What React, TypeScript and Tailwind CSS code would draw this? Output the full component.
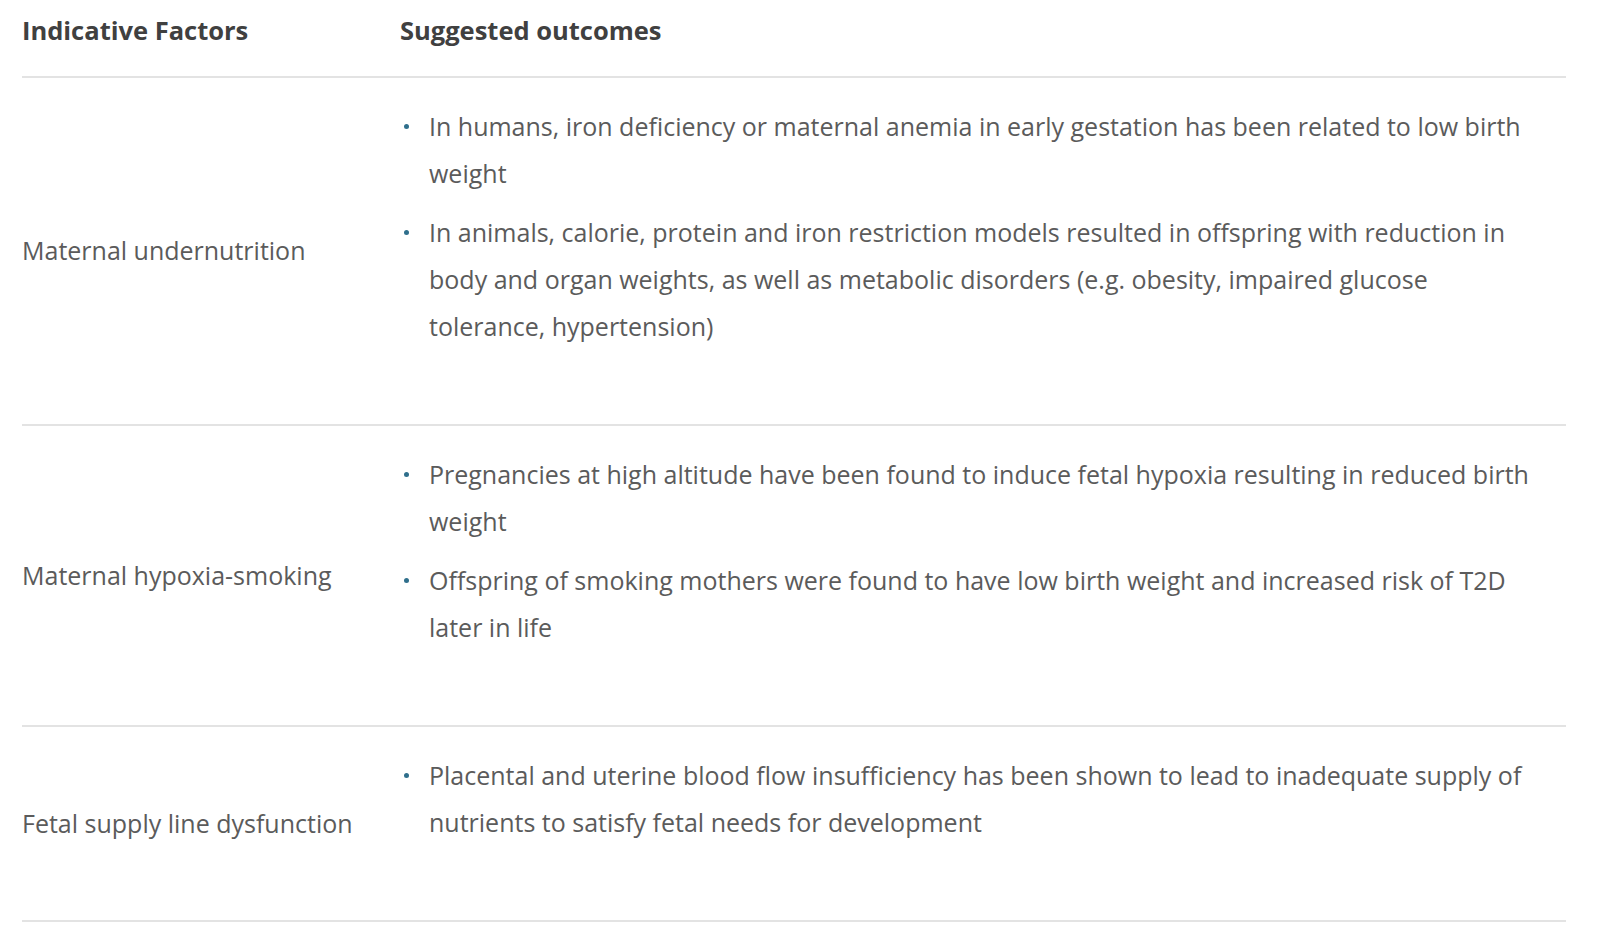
import React from "react";

type Row = { factor: string; outcomes: string[] };

const rows: Row[] = [
  {
    factor: "Maternal undernutrition",
    outcomes: [
      "In humans, iron deficiency or maternal anemia in early gestation has been related to low birth weight",
      "In animals, calorie, protein and iron restriction models resulted in offspring with reduction in body and organ weights, as well as metabolic disorders (e.g. obesity, impaired glucose tolerance, hypertension)",
    ],
  },
  {
    factor: "Maternal hypoxia-smoking",
    outcomes: [
      "Pregnancies at high altitude have been found to induce fetal hypoxia resulting in reduced birth weight",
      "Offspring of smoking mothers were found to have low birth weight and increased risk of T2D later in life",
    ],
  },
  {
    factor: "Fetal supply line dysfunction",
    outcomes: [
      "Placental and uterine blood flow insufficiency has been shown to lead to inadequate supply of nutrients to satisfy fetal needs for development",
    ],
  },
];

const FactorRow = ({ row }: { row: Row }) => (
  <div className="grid grid-cols-[378px_1fr] border-b-2 border-[#e3e3e3]">
    <div className="flex items-center text-[25px] text-[#5b5b5b]">{row.factor}</div>
    <ul className="pt-[25px] pb-[62px] pr-[28px]">
      {row.outcomes.map((o) => (
        <li key={o} className="flex mb-3 text-[25px] leading-[47px] text-[#5b5b5b]">
          <span className="w-[29px] shrink-0 pt-[21px] pl-[4px]">
            <span className="block w-[5px] h-[5px] rounded-full bg-[#2f6f8c]" />
          </span>
          <span>{o}</span>
        </li>
      ))}
    </ul>
  </div>
);

export default function App() {
  return (
    <div
      className="min-h-[946px] bg-white pl-[22px] pr-[34px]"
      style={{ fontFamily: '"Open Sans", "Liberation Sans", sans-serif' }}
    >
      <div className="grid grid-cols-[378px_1fr] border-b-2 border-[#e3e3e3] pt-[7px] pb-[22px] text-[25.5px] leading-[47px] font-bold text-[#404040]">
        <div>Indicative Factors</div>
        <div>Suggested outcomes</div>
      </div>
      {rows.map((r) => (
        <FactorRow key={r.factor} row={r} />
      ))}
    </div>
  );
}
